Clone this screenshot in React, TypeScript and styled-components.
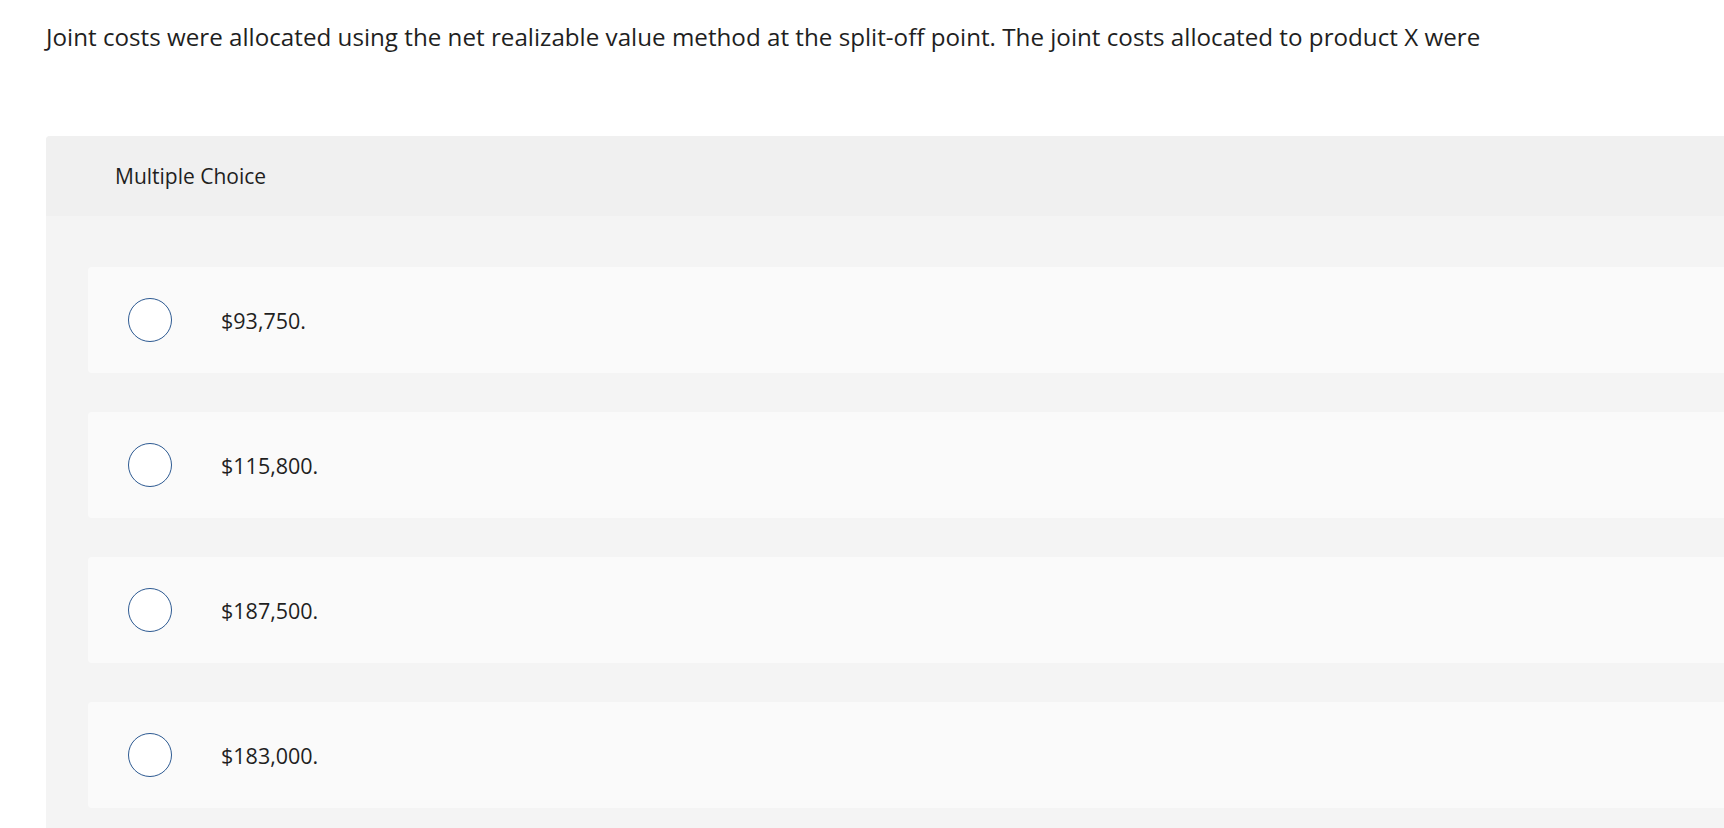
import React from "react";
import styled, { createGlobalStyle } from "styled-components";

const GlobalStyle = createGlobalStyle`
  html, body {
    margin: 0;
    padding: 0;
    background: #ffffff;
    overflow: hidden;
  }
  body {
    font-family: "Open Sans", "Lato", Arial, sans-serif;
    color: #1f1f1f;
  }
`;

const Page = styled.div`
  display: flex;
  flex-direction: column;
  padding: 0 0 0 46px;
  width: 100%;
  box-sizing: border-box;
`;

const Question = styled.p`
  margin: 0;
  padding-top: 22px;
  height: 136px;
  box-sizing: border-box;
  font-size: 24.2px;
  line-height: 30px;
  color: #1f1f1f;
  white-space: nowrap;
`;

const Card = styled.section`
  display: flex;
  flex-direction: column;
  background: #f4f4f4;
  border-top-left-radius: 4px;
  overflow: hidden;
`;

const CardHeader = styled.header`
  display: flex;
  align-items: center;
  height: 80px;
  padding-left: 69px;
  background: #f0f0f0;
  font-size: 21px;
  color: #1f1f1f;
`;

const Options = styled.div`
  display: flex;
  flex-direction: column;
  gap: 39px;
  padding: 51px 0 40px 42px;
`;

const Option = styled.label`
  display: flex;
  align-items: center;
  gap: 49px;
  height: 106px;
  padding-left: 40px;
  background: #fafafa;
  border-top-left-radius: 4px;
  border-bottom-left-radius: 4px;
  cursor: pointer;
`;

const Radio = styled.span`
  flex: 0 0 auto;
  width: 44px;
  height: 44px;
  box-sizing: border-box;
  border-radius: 50%;
  border: 1.3px solid #2d5a92;
  background: #ffffff;
`;

const OptionText = styled.span`
  font-size: 21.5px;
  color: #1f1f1f;
`;

const choices = ["$93,750.", "$115,800.", "$187,500.", "$183,000."];

export default function App() {
  return (
    <>
      <GlobalStyle />
      <Page>
        <Question>
          Joint costs were allocated using the net realizable value method at the split-off point. The joint costs
          allocated to product X were
        </Question>
        <Card>
          <CardHeader>Multiple Choice</CardHeader>
          <Options>
            {choices.map((c) => (
              <Option key={c}>
                <Radio />
                <OptionText>{c}</OptionText>
              </Option>
            ))}
          </Options>
        </Card>
      </Page>
    </>
  );
}
